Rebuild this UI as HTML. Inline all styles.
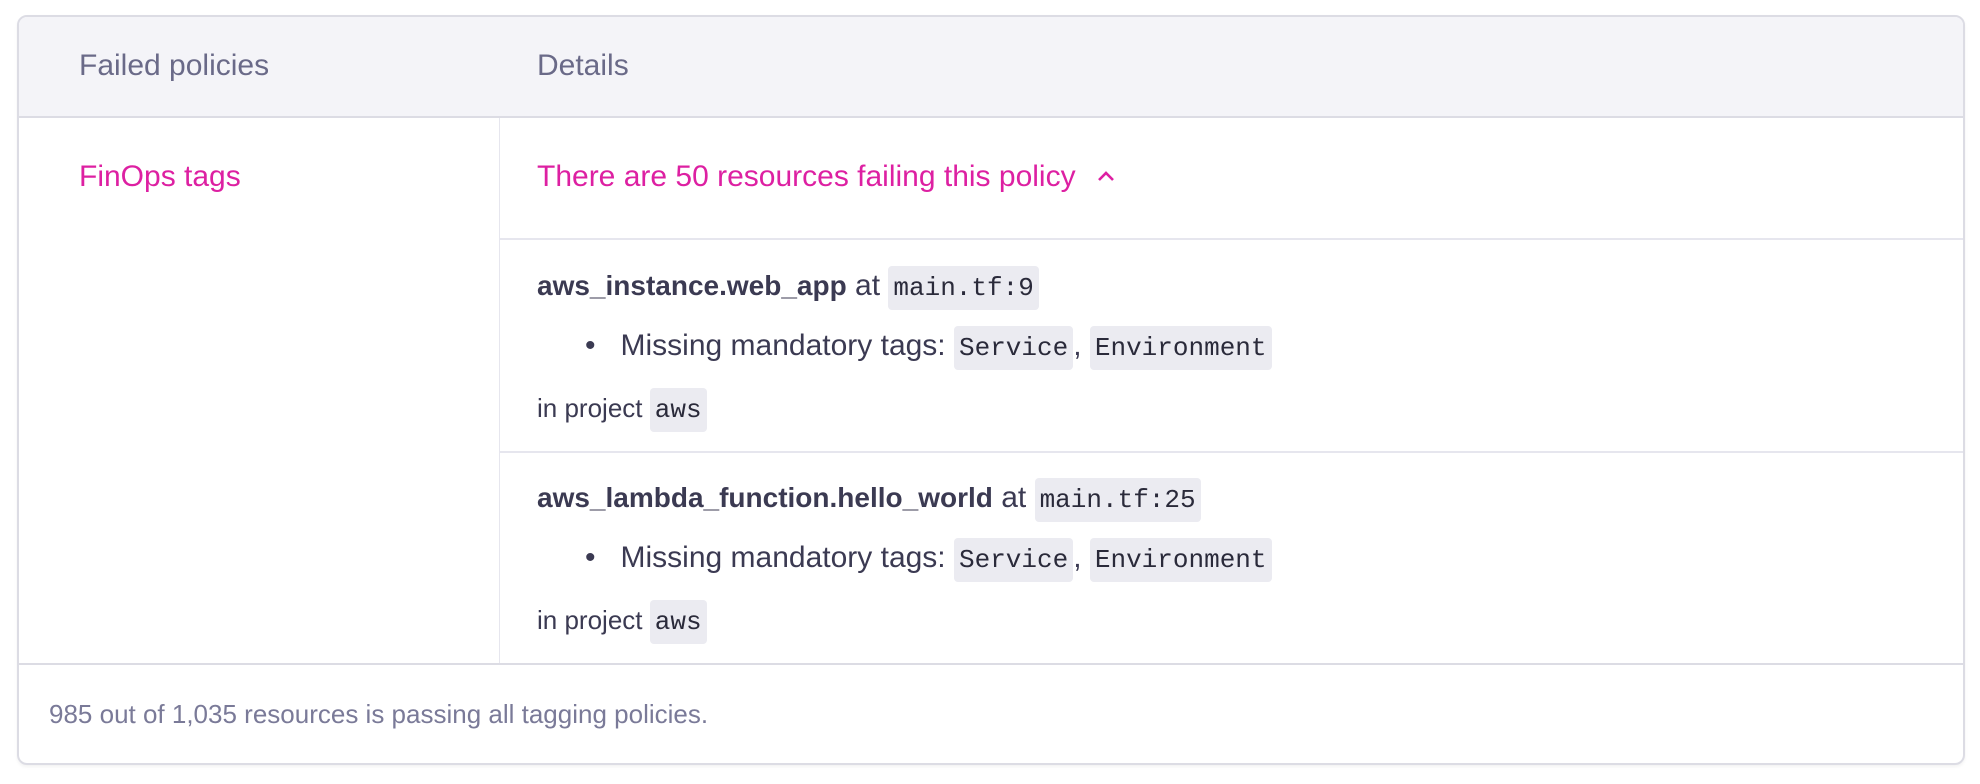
<!DOCTYPE html>
<html><head><meta charset="utf-8"><style>
*{box-sizing:border-box;margin:0;padding:0}
body{width:1980px;height:784px;background:#fff;font-family:"Liberation Sans",sans-serif;position:relative;overflow:hidden}
.card{position:absolute;left:17px;top:15px;width:1948px;height:750px;border:2px solid #dcdce4;border-radius:10px;overflow:hidden;box-shadow:0 2px 3px rgba(0,0,0,.05)}
.hdr{position:absolute;left:0;top:0;width:100%;height:101px;background:#f4f4f8;border-bottom:2px solid #dcdce4}
.t{position:absolute;white-space:nowrap;line-height:1}
.h{color:#6a6a88;font-size:30px}
.pink{color:#dd20a2;font-size:30px}
.dk{color:#3b3a52;font-size:30px}
.dk b{font-size:28px}
.sm{color:#3b3a52;font-size:26px}
code{font-family:"Liberation Mono",monospace;background:#ebebf1;border-radius:4px;padding:7px 5px;font-size:26px;color:#2a2a3a}
.vl{position:absolute;left:480px;top:101px;width:1px;height:545px;background:#e6e6ee}
.hl{position:absolute;height:2px;background:#e6e6ee}
</style></head><body>
<div class="card">
<div class="hdr"></div>
<div class="t h" style="left:60px;top:34px">Failed policies</div>
<div class="t h" style="left:518px;top:34px">Details</div>
<div class="vl"></div>
<div class="t pink" style="left:60px;top:145px">FinOps tags</div>
<div class="t pink" style="left:518px;top:145px">There are 50 resources failing this policy
<svg width="20" height="14" viewBox="0 0 20 14" style="margin-left:12px;vertical-align:3px"><path d="M3 11 L10 4 L17 11" fill="none" stroke="#dd20a2" stroke-width="2.6"/></svg></div>
<div class="hl" style="left:481px;top:221px;width:1470px"></div>
<div class="t dk" style="left:518px;top:254px"><b>aws_instance.web_app</b> at <code>main.tf:9</code></div>
<div class="t dk" style="left:566px;top:314px">•&nbsp;&nbsp; Missing mandatory tags: <code>Service</code>, <code>Environment</code></div>
<div class="t sm" style="left:518px;top:378px">in project <code>aws</code></div>
<div class="hl" style="left:481px;top:434px;width:1470px"></div>
<div class="t dk" style="left:518px;top:466px"><b>aws_lambda_function.hello_world</b> at <code>main.tf:25</code></div>
<div class="t dk" style="left:566px;top:526px">•&nbsp;&nbsp; Missing mandatory tags: <code>Service</code>, <code>Environment</code></div>
<div class="t sm" style="left:518px;top:590px">in project <code>aws</code></div>
<div class="hl" style="left:0;top:646px;width:100%;background:#dcdce4"></div>
<div class="t" style="left:30px;top:684px;font-size:26px;color:#7a7a98">985 out of 1,035 resources is passing all tagging policies.</div>
</div>
</body></html>
